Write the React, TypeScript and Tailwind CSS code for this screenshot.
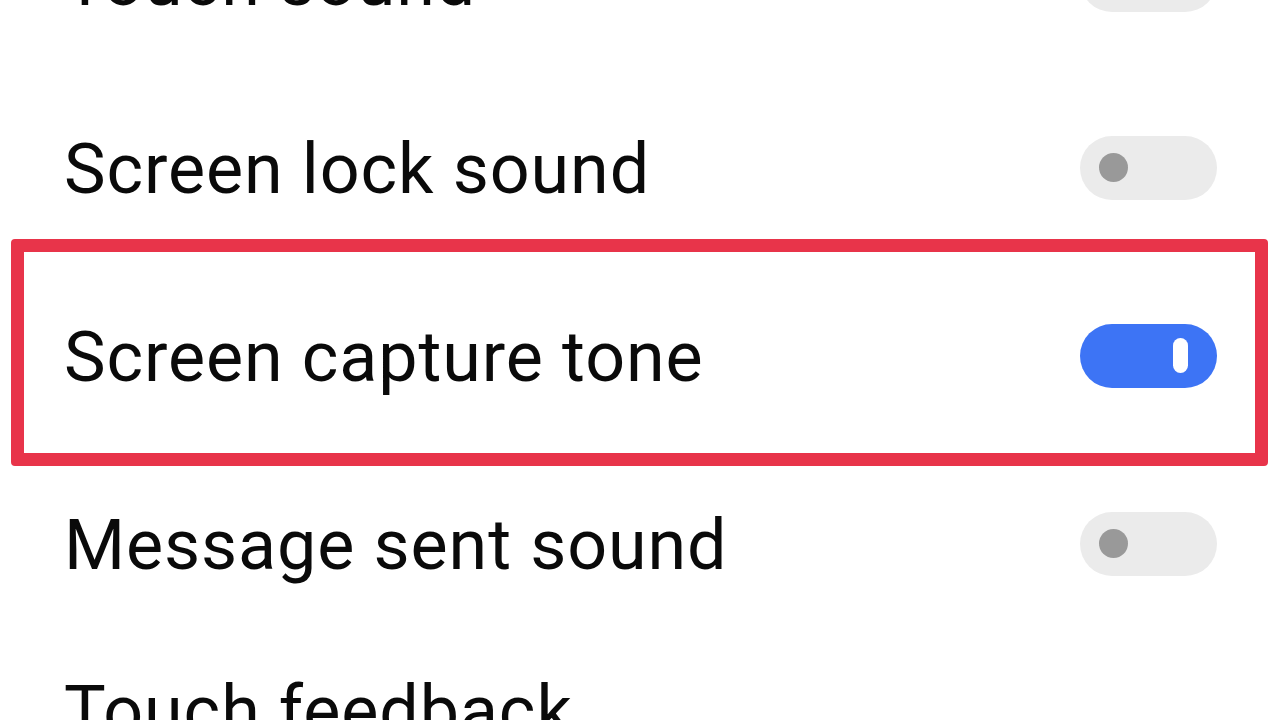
import React from "react";

type Row = { label: string; on: boolean; highlight?: boolean };

const rows: Row[] = [
    { label: "Touch sound", on: false },
    { label: "Screen lock sound", on: false },
    { label: "Screen capture tone", on: true, highlight: true },
    { label: "Message sent sound", on: false },
];

function Toggle(props: { on: boolean }) {
    if (props.on) {
        return <div className="w-[137px] h-[64px] -mt-[3px] rounded-full bg-[#3d74f5] flex items-center justify-end pr-[29px]">
            <div className="w-[15px] h-[35px] rounded-full bg-white" />
        </div>
    }
    return <div className="w-[137px] h-[64px] -mt-[3px] rounded-full bg-[#ebebeb] flex items-center pl-[19px]">
        <div className="w-[29px] h-[29px] rounded-full bg-[#999999]" />
    </div>
}

export default function App() {
    return <div className="w-[1280px] h-[720px] overflow-hidden bg-white" style={{ fontFamily: "Roboto, 'Noto Sans', sans-serif" }}>
        <div className="flex flex-col mt-[-113px]">
            {rows.map((row, index) => (
                <div key={index} className="relative h-[188px] flex items-center justify-between pl-[64px] pr-[63px]">
                    <span className="text-[70px] leading-none text-[#0a0a0a] tracking-[0.9px]">{row.label}</span>
                    <Toggle on={row.on} />
                    {row.highlight ? <div className="absolute left-[11px] right-[12px] top-[-24px] bottom-[-15px] border-[13px] border-[#e8344a] rounded-[4px] pointer-events-none" /> : null}
                </div>
            ))}
            <div className="h-[160px] flex items-center pl-[64px] -mt-[8px]">
                <span className="text-[70px] leading-none text-[#0a0a0a] tracking-[0.9px]">Touch feedback</span>
            </div>
        </div>
    </div>
}
